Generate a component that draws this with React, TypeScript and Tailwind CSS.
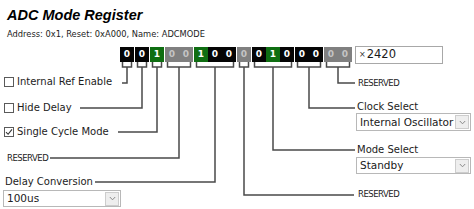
import React from "react"

type Field = { v: string; reserved?: boolean }

const fields: Field[] = [
  { v: "0" },
  { v: "0" },
  { v: "1" },
  { v: "00", reserved: true },
  { v: "100" },
  { v: "0", reserved: true },
  { v: "010" },
  { v: "00" },
  { v: "00", reserved: true },
]

// connector geometry: field x range, label y, where the line ends
const links = [
  { x0: 120, x1: 134, y: 83, xe: 122 },
  { x0: 135, x1: 149, y: 108, xe: 80 },
  { x0: 150, x1: 164, y: 132, xe: 118 },
  { x0: 165, x1: 193, y: 158, xe: 50 },
  { x0: 194, x1: 236, y: 182, xe: 95 },
  { x0: 237, x1: 251, y: 195, xe: 354 },
  { x0: 252, x1: 294, y: 150, xe: 355 },
  { x0: 295, x1: 323, y: 108, xe: 355 },
  { x0: 324, x1: 352, y: 83, xe: 355 },
]

function Bit({ value, reserved }: { value: string; reserved?: boolean }) {
  const tone = reserved
    ? "bg-[#808080] text-[#c4c4c4]"
    : value === "1"
      ? "bg-[#0f6e12] text-white"
      : "bg-[#050505] text-white"
  return (
    <div className={`w-[14px] h-[15px] flex items-center justify-center text-[9px] font-bold leading-none ${tone}`}>
      {value}
    </div>
  )
}

function Checkbox({ checked }: { checked?: boolean }) {
  return (
    <div className="w-[10px] h-[10px] border border-[#5a5a5a] bg-white flex items-center justify-center">
      {checked && (
        <svg width="8" height="8" viewBox="0 0 8 8">
          <path d="M1 4.2 L3.1 6.3 L7 1.4" fill="none" stroke="#333" strokeWidth="1.1" />
        </svg>
      )}
    </div>
  )
}

function Select({ value, className }: { value: string; className: string }) {
  return (
    <div className={`border border-[#b8b8b8] bg-white flex items-center justify-between pl-[3px] ${className}`}>
      <span className="text-[10.5px] leading-none text-[#202020]">{value}</span>
      <div className="w-[14px] h-[14px] mr-px border border-[#cdcdcd] bg-[#eeeeee] flex items-center justify-center">
        <svg width="7" height="5" viewBox="0 0 7 5">
          <path d="M0.8 1 L3.5 3.8 L6.2 1" fill="none" stroke="#8a8a8a" strokeWidth="1" />
        </svg>
      </div>
    </div>
  )
}

export default function App() {
  return (
    <div className="relative w-[474px] h-[209px] bg-white overflow-hidden text-[#1c1c1c] font-['DejaVu_Sans',sans-serif]">
      <div className="pl-[7px] pt-[6px]">
        <h1 className="font-['Liberation_Sans',Arial,sans-serif] text-[14.5px] leading-[18px] font-bold italic text-black">
          ADC Mode Register
        </h1>
        <p className="mt-[5px] text-[8.3px] leading-[10px]">Address: 0x1, Reset: 0xA000, Name: ADCMODE</p>
      </div>

      <div className="mt-[7px] h-[18px] flex items-start">
        <div className="ml-[120px] mt-px flex gap-px">
          {fields.map((f, i) => (
            <div key={i} className="flex">
              {f.v.split("").map((b, j) => (
                <Bit key={j} value={b} reserved={f.reserved} />
              ))}
            </div>
          ))}
        </div>
        <div className="ml-[3px] w-[88px] h-[18px] border border-[#a8a8a8] flex items-center pl-[3px]">
          <span className="text-[8px] leading-none text-[#333] mr-px">×</span>
          <span className="text-[11.5px] leading-none text-[#1a1a1a]">2420</span>
        </div>
      </div>

      <div className="flex">
        <div className="w-[355px] text-[10px] leading-[12px]">
          <div className="mt-[12px] h-[12px] flex items-center gap-[3px] pl-[4px]">
            <Checkbox />
            <span>Internal Ref Enable</span>
          </div>
          <div className="mt-[14px] h-[12px] flex items-center gap-[3px] pl-[4px]">
            <Checkbox />
            <span>Hide Delay</span>
          </div>
          <div className="mt-[12px] h-[12px] flex items-center gap-[3px] pl-[4px]">
            <Checkbox checked />
            <span>Single Cycle Mode</span>
          </div>
          <div className="mt-[14px] h-[12px] pl-[7px] flex items-center text-[8.5px] tracking-[-0.5px]">RESERVED</div>
          <div className="mt-[12px] h-[12px] pl-[5px] flex items-center">Delay Conversion</div>
          <Select value="100us" className="mt-[2px] ml-[3px] w-[118px] h-[17px]" />
        </div>

        <div className="flex-1 text-[10px] leading-[12px]">
          <div className="mt-[13px] h-[12px] pl-[3px] flex items-center text-[8.5px] tracking-[-0.5px]">RESERVED</div>
          <div className="mt-[12px] h-[12px] pl-[2px] flex items-center">Clock Select</div>
          <Select value="Internal Oscillator" className="ml-px w-[115px] h-[18px]" />
          <div className="mt-[13px] h-[12px] pl-[2px] flex items-center">Mode Select</div>
          <Select value="Standby" className="mt-px ml-px w-[115px] h-[17px]" />
          <div className="mt-[14px] h-[12px] pl-[3px] flex items-center text-[8.5px] tracking-[-0.5px]">RESERVED</div>
        </div>
      </div>

      <svg className="absolute inset-0 pointer-events-none" width="474" height="209" viewBox="0 0 474 209">
        {links.map((l, i) => {
          const cx = Math.round((l.x0 + l.x1) / 2)
          return (
            <g key={i} fill="none" stroke="#4a4a4a" strokeWidth="1.5">
              <path d={`M${l.x0 + 2.5} 62 V67 H${l.x1 - 2.5} V62`} />
              <path d={`M${cx} 67 V${l.y} H${l.xe}`} />
            </g>
          )
        })}
      </svg>
    </div>
  )
}
